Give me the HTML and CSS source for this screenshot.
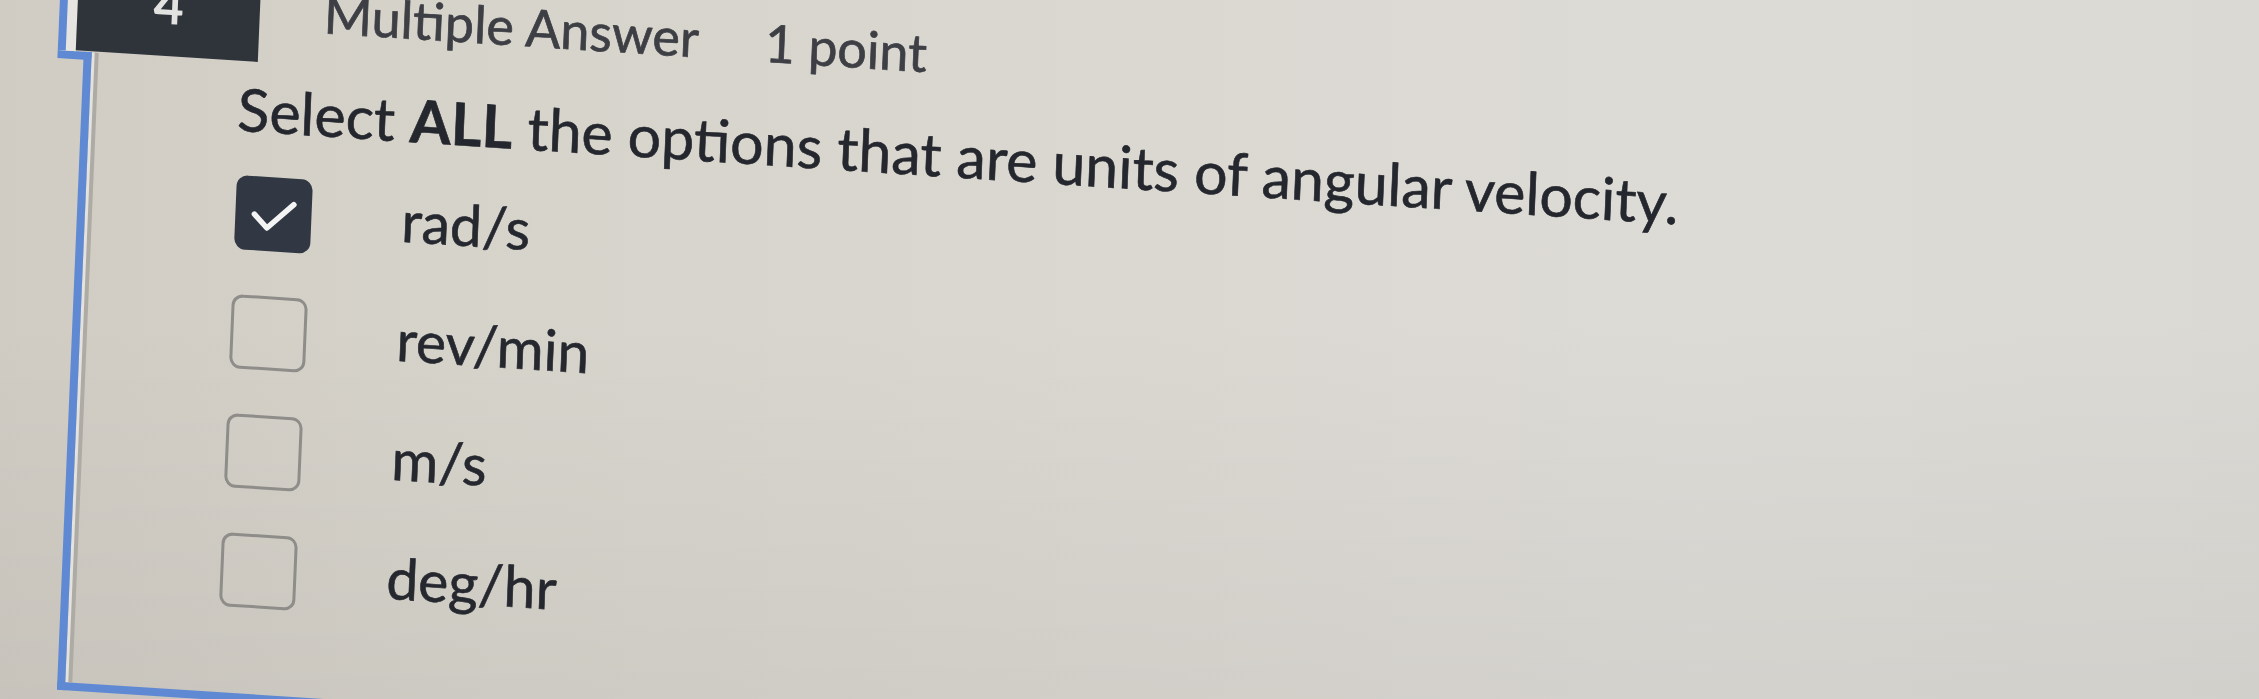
FILE: index.html
```html
<!DOCTYPE html>
<html lang="en">
<head>
<meta charset="utf-8">
<title>Multiple Answer</title>
<link rel="stylesheet" href="styles.css">
</head>
<body>
<div class="scene">
  <div class="top">
    <div class="rail"></div>
    <div class="tab">4</div>
    <div class="hdr">
      <span class="qtype">Multiple Answer</span>
      <span class="points">1 point</span>
    </div>
  </div>
  <div class="jog"></div>
  <div class="card">
    <p class="prompt">Select <strong>ALL</strong> the options that are units of angular velocity.</p>
    <ul class="options">
      <li class="opt">
        <span class="box checked">
          <svg viewBox="0 0 76 74" width="76" height="74"><polyline points="19,38 32,51 58,26" fill="none" stroke="#f4f4f4" stroke-width="5.5" stroke-linecap="round" stroke-linejoin="round"/></svg>
        </span>
        <span class="label">rad/s</span>
      </li>
      <li class="opt">
        <span class="box"></span>
        <span class="label">rev/min</span>
      </li>
      <li class="opt">
        <span class="box"></span>
        <span class="label">m/s</span>
      </li>
      <li class="opt">
        <span class="box"></span>
        <span class="label">deg/hr</span>
      </li>
    </ul>
  </div>
</div>
</body>
</html>
```

FILE: styles.css
```css
html, body {
  margin: 0;
  padding: 0;
}
body {
  width: 2259px;
  height: 699px;
  overflow: hidden;
  font-family: Lato, "Liberation Sans", sans-serif;
  background:
    linear-gradient(to bottom, rgba(0,0,0,0) 45%, rgba(0,0,0,0.045) 100%),
    linear-gradient(to right, #d0ccc4 0%, #d6d3cb 20%, #dad7d0 45%, #dddbd6 75%, #dad9d4 100%);
}
.scene {
  width: 2500px;
  margin-top: -50px;
  padding-left: 53px;
  box-sizing: border-box;
  transform-origin: 238px 225px;
  transform: matrix(1, 0.065, -0.042, 1, 0, 0);
}
.top {
  display: flex;
  align-items: flex-start;
  height: 112px;
}
.rail {
  width: 10px;
  height: 112px;
  border-left: 8px solid #5f8ad3;
  background: #e6e5e1;
}
.tab {
  width: 182px;
  height: 111px;
  background: #2f343a;
  color: #e2e2e0;
  font-size: 52px;
  font-weight: 700;
  line-height: 62px;
  padding-top: 28px;
  box-sizing: border-box;
  text-align: center;
}
.hdr {
  display: flex;
  gap: 66px;
  margin-left: 64px;
  padding-top: 27px;
  font-size: 52px;
  line-height: 62px;
  color: #3d3f45;
  -webkit-text-stroke: 0.7px currentColor;
}
.jog {
  width: 34px;
  height: 8px;
  background: #5f8ad3;
}
.card {
  margin-left: 26px;
  margin-top: -8px;
  padding-top: 8px;
  padding-bottom: 41px;
  border-left: 8px solid #5f8ad3;
  border-bottom: 8px solid #5f8ad3;
  box-shadow: inset 3px 0 0 #e3e2de, inset 7px 0 0 #aeaba4;
}
.prompt {
  margin: 0;
  padding: 4px 0 0 148px;
  font-size: 59px;
  line-height: 70px;
  color: #25272e;
  -webkit-text-stroke: 0.6px currentColor;
}
.prompt strong {
  font-weight: 700;
}
.options {
  list-style: none;
  margin: 31px 0 0;
  padding: 0 0 0 150px;
}
.opt {
  display: flex;
  align-items: flex-start;
  height: 119px;
}
.box {
  flex: none;
  width: 76px;
  height: 74px;
  box-sizing: border-box;
  border: 3px solid #8f8d89;
  border-radius: 11px;
}
.box.checked {
  border: none;
  background: #313843;
}
.box svg {
  display: block;
}
.label {
  margin-left: 90px;
  font-size: 57px;
  line-height: 68px;
  color: #26282f;
  -webkit-text-stroke: 0.6px currentColor;
}
```
